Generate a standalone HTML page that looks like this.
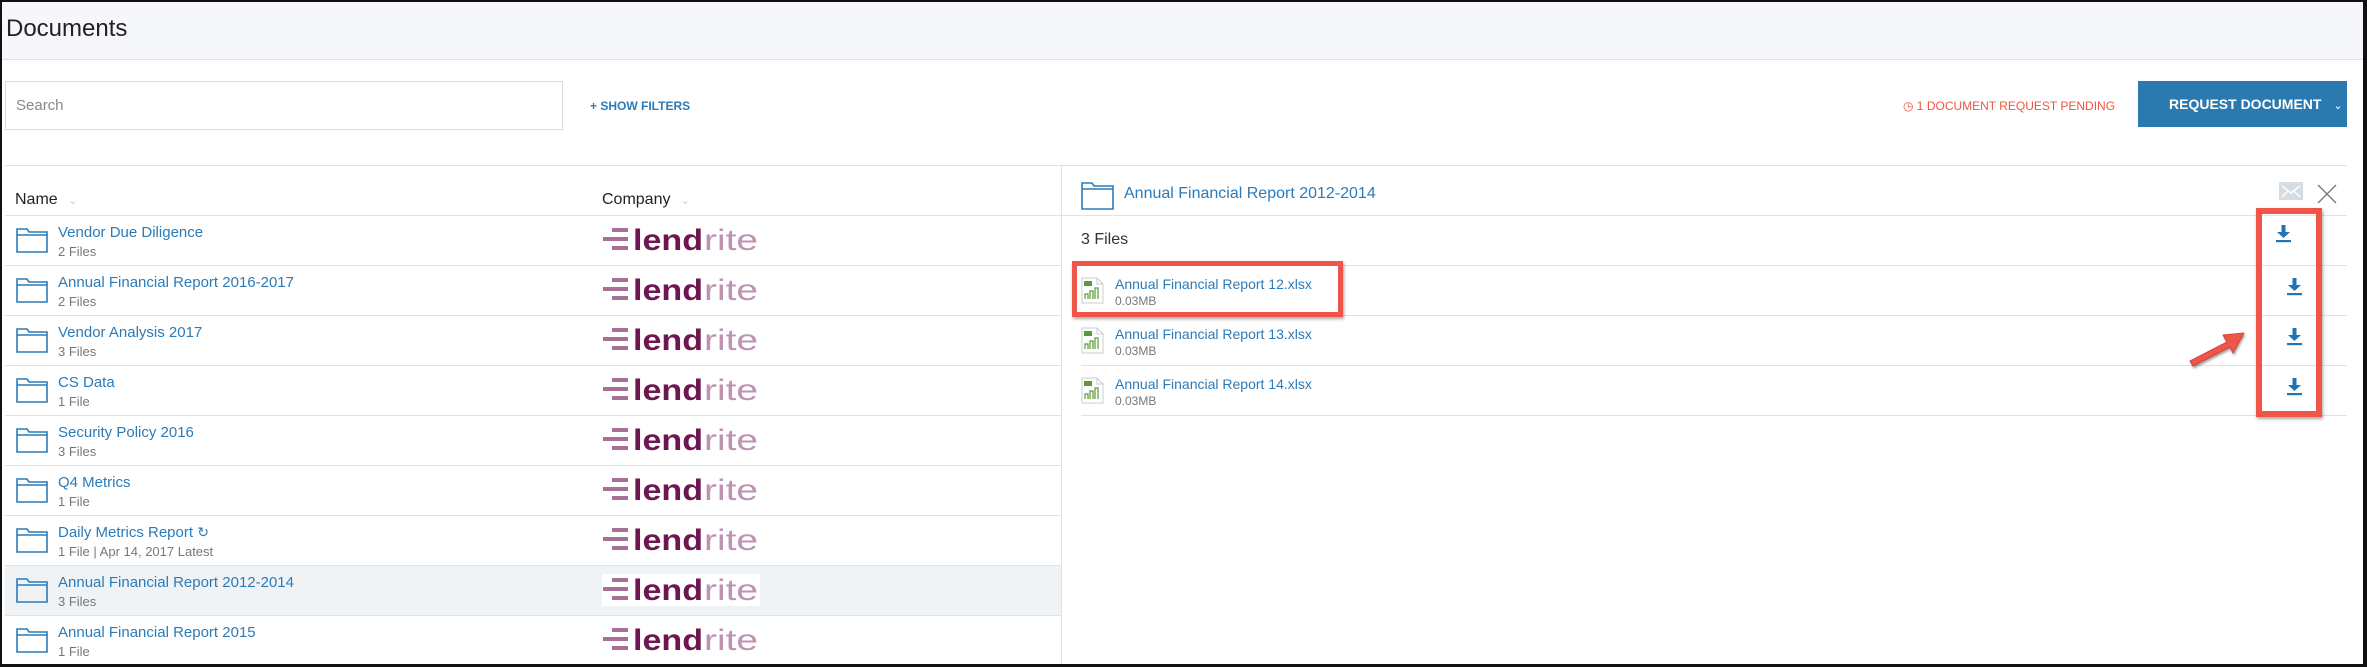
<!DOCTYPE html>
<html><head><meta charset="utf-8"><style>
*{margin:0;padding:0;box-sizing:border-box}
body{width:2367px;height:667px;overflow:hidden;background:#fff;font-family:"Liberation Sans",Arial,sans-serif;position:relative}
.a{position:absolute;white-space:nowrap}
.hl{position:absolute;height:1px;background:#dde3e8}
.t{color:#2b7bb9;font-size:15px}
.s{color:#777;font-size:13px}
</style></head><body>
<div class="a" style="left:0;top:0;width:2367px;height:60px;background:#f5f7fa;border-bottom:1px solid #dde3e8"></div>
<div class="a" style="left:6px;top:15px;font-size:24px;color:#222">Documents</div>
<div class="a" style="left:5px;top:81px;width:558px;height:49px;border:1px solid #d8dde2"></div>
<div class="a" style="left:16px;top:97px;font-size:15px;color:#888">Search</div>
<div class="a" style="left:590px;top:99px;font-size:12px;font-weight:bold;color:#2b7bb9">+ SHOW FILTERS</div>
<div class="a" style="left:1903px;top:99px;font-size:12px;color:#f0553f">&#9719; 1 DOCUMENT REQUEST PENDING</div>
<div class="a" style="left:2138px;top:81px;width:209px;height:46px;background:#2a7ab0;color:#fff;font-size:14px;font-weight:bold;line-height:46px;padding-left:31px">REQUEST DOCUMENT <span style="font-weight:normal;font-size:11px;margin-left:8px">&#8964;</span></div>
<div class="hl" style="left:5px;top:165px;width:2342px"></div>
<div class="a" style="left:1061px;top:165px;width:1px;height:502px;background:#dde3e8"></div>
<div class="a" style="left:15px;top:191px;font-size:16px;color:#222">Name <span style="color:#ccc;font-size:11px;margin-left:6px">&#8964;</span></div>
<div class="a" style="left:602px;top:191px;font-size:16px;color:#222">Company <span style="color:#ccc;font-size:11px;margin-left:6px">&#8964;</span></div>
<div class="hl" style="left:5px;top:215px;width:1056px"></div>

<div id="rows"></div>
<script>
var d=[["Vendor Due Diligence","2 Files"],["Annual Financial Report 2016-2017","2 Files"],["Vendor Analysis 2017","3 Files"],["CS Data","1 File"],["Security Policy 2016","3 Files"],["Q4 Metrics","1 File"],["Daily Metrics Report <span style='color:#2b7bb9;font-size:14px'>&#8635;</span>","1 File | Apr 14, 2017 Latest"],["Annual Financial Report 2012-2014","3 Files"],["Annual Financial Report 2015","1 File"]];
var h="";
var folder='<svg width="32" height="25" viewBox="0 0 32 25"><path d="M1 1H11L13 4H31V24H1Z M1 7H31" fill="none" stroke="#2b7bb9" stroke-width="1.6"/></svg>';
var logo='<svg width="160" height="32" viewBox="0 0 160 32"><rect x="10" y="4" width="16" height="4" fill="#a86f99"/><rect x="1" y="13" width="25" height="4" fill="#a86f99"/><rect x="10" y="22" width="16" height="4" fill="#a86f99"/><text y="26" font-family="Liberation Sans,sans-serif" font-size="30"><tspan x="31" font-weight="bold" fill="#6d1650" textLength="70" lengthAdjust="spacingAndGlyphs">lend</tspan><tspan x="102" fill="#bd92b3" textLength="54" lengthAdjust="spacingAndGlyphs">rite</tspan></text></svg>';
for(var i=0;i<9;i++){var y=216+50*i;
if(i==7)h+='<div class="a" style="left:5px;top:'+y+'px;width:1056px;height:49px;background:#f0f3f6"></div>';
h+='<div class="a" style="left:16px;top:'+(y+12)+'px">'+folder+'</div>';
h+='<div class="a t" style="left:58px;top:'+(y+8)+'px">'+d[i][0]+'</div>';
h+='<div class="a s" style="left:58px;top:'+(y+28)+'px">'+d[i][1]+'</div>';
h+='<div class="a" style="left:602px;top:'+(y+8)+'px;height:32px;width:158px;overflow:hidden;'+(i==7?'background:#fff':'')+'">'+logo+'</div>';
h+='<div class="hl" style="left:5px;top:'+(y+49)+'px;width:1056px"></div>';}
var dl='<svg width="15" height="18" viewBox="0 0 15 18"><rect x="5.5" y="0" width="4" height="7" fill="#1f76b3"/><path d="M1 7H14L7.5 13Z" fill="#1f76b3"/><rect x="0" y="15" width="15" height="2.2" fill="#1f76b3"/></svg>';
var xl='<svg width="23" height="27" viewBox="0 0 23 27"><path d="M1 1H16L22 7V26H1Z" fill="#fff" stroke="#c8ccd0"/><path d="M16 1V7H22" fill="none" stroke="#c8ccd0"/><rect x="3" y="4" width="8" height="5" fill="#5a9a3a"/><path d="M4 22V17H7V22M9 22V14H12V22M14 22V11H17V22" fill="none" stroke="#5a9a3a" stroke-width="1.2"/></svg>';
h+='<div class="a" style="left:2276px;top:225px">'+dl+'</div>';
for(var j=0;j<3;j++){var y=266+50*j;
h+='<div class="a" style="left:1081px;top:'+(y+11)+'px">'+xl+'</div>';
h+='<div class="a" style="left:1115px;top:'+(y+10)+'px;font-size:14px;color:#2b7bb9">Annual Financial Report '+(12+j)+'.xlsx</div>';
h+='<div class="a" style="left:1115px;top:'+(y+28)+'px;font-size:12px;color:#777">0.03MB</div>';
h+='<div class="a" style="left:2287px;top:'+(y+12)+'px">'+dl+'</div>';
h+='<div class="hl" style="left:1081px;top:'+(y+49)+'px;width:1266px"></div>';}
document.getElementById("rows").innerHTML=h;
</script>
<div class="a" style="left:1081px;top:182px"><svg width="33" height="28" viewBox="0 0 33 28"><path d="M1 1H11L13 4H32V27H1Z M1 7H32" fill="none" stroke="#2b7bb9" stroke-width="1.6"/></svg></div>
<div class="a t" style="left:1124px;top:185px;font-size:16px">Annual Financial Report 2012-2014</div>
<div class="a" style="left:2279px;top:182px;width:24px;height:18px;background:#d5dde2"><svg width="24" height="18"><path d="M3 4L12 11L21 4M3 15L9 9M21 15L15 9" fill="none" stroke="#fff" stroke-width="1.5"/></svg></div>
<div class="a" style="left:2317px;top:184px"><svg width="20" height="20"><path d="M1 1L19 19M19 1L1 19" stroke="#777" stroke-width="1.3"/></svg></div>
<div class="hl" style="left:1061px;top:215px;width:1286px"></div>
<div class="a" style="left:1081px;top:231px;font-size:16px;color:#333">3 Files</div>
<div class="hl" style="left:1081px;top:265px;width:1266px"></div>
<div class="a" style="left:1072px;top:261px;width:271px;height:56px;border:5px solid #f0554a;box-shadow:1px 2px 3px rgba(0,0,0,.35)"></div>
<div class="a" style="left:2256px;top:208px;width:66px;height:209px;border:6px solid #f0554a;box-shadow:1px 2px 3px rgba(0,0,0,.35)"></div>
<div class="a" style="left:2180px;top:325px"><svg width="70" height="45"><path d="M10 36L47 17L43 10L64 8L53 28L50 22L13 41Z" fill="#f0554a" stroke="#d9443a" stroke-width="1" stroke-linejoin="round" style="filter:drop-shadow(1px 2px 1px rgba(0,0,0,.35))"/></svg></div>
<div class="a" style="left:0;top:0;width:2367px;height:667px;border:2px solid #111;border-right-width:4px;border-bottom-width:3px"></div>
</body></html>
